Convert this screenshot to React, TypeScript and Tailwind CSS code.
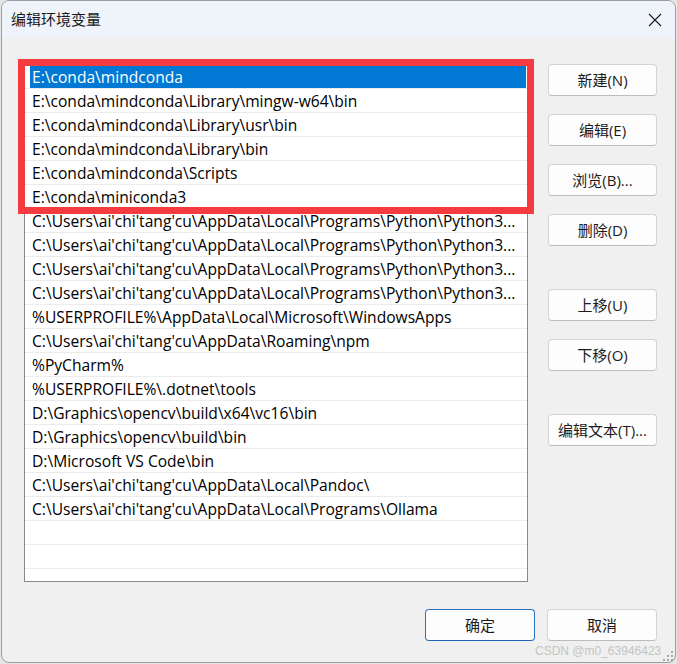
import React from "react";

const rows: string[] = [
  "E:\\conda\\mindconda",
  "E:\\conda\\mindconda\\Library\\mingw-w64\\bin",
  "E:\\conda\\mindconda\\Library\\usr\\bin",
  "E:\\conda\\mindconda\\Library\\bin",
  "E:\\conda\\mindconda\\Scripts",
  "E:\\conda\\miniconda3",
  "C:\\Users\\ai'chi'tang'cu\\AppData\\Local\\Programs\\Python\\Python3...",
  "C:\\Users\\ai'chi'tang'cu\\AppData\\Local\\Programs\\Python\\Python3...",
  "C:\\Users\\ai'chi'tang'cu\\AppData\\Local\\Programs\\Python\\Python3...",
  "C:\\Users\\ai'chi'tang'cu\\AppData\\Local\\Programs\\Python\\Python3...",
  "%USERPROFILE%\\AppData\\Local\\Microsoft\\WindowsApps",
  "C:\\Users\\ai'chi'tang'cu\\AppData\\Roaming\\npm",
  "%PyCharm%",
  "%USERPROFILE%\\.dotnet\\tools",
  "D:\\Graphics\\opencv\\build\\x64\\vc16\\bin",
  "D:\\Graphics\\opencv\\build\\bin",
  "D:\\Microsoft VS Code\\bin",
  "C:\\Users\\ai'chi'tang'cu\\AppData\\Local\\Pandoc\\",
  "C:\\Users\\ai'chi'tang'cu\\AppData\\Local\\Programs\\Ollama",
  "",
  "",
  "",
];

function Btn({ label, className = "" }: { label: string; className?: string }) {
  return (
    <div
      className={
        "h-[32px] w-[109px] rounded-[4px] border border-[#d3d3d3] border-b-[#bcbcbc] bg-[#fdfdfd] flex items-center justify-center text-[15px] text-[#1b1b1b] " +
        className
      }
    >
      {label}
    </div>
  );
}

export default function App() {
  return (
    <div
      className="relative w-[677px] h-[664px] bg-[#e6e6e6] overflow-hidden"
      style={{ fontFamily: '"Open Sans", "Noto Sans CJK SC", sans-serif' }}
    >
      <div className="ml-[1px] w-[675px] h-[663px] rounded-[8px] border border-[#9c9c9c] bg-[#f0f0f0] overflow-hidden flex flex-col">
        {/* title bar */}
        <div className="h-[37px] shrink-0 bg-[#eff3fa] flex items-center justify-between pl-[9px] pr-[13px]">
          <span
            className="text-[15px] text-[#1a1a1a]"
            style={{ fontFamily: '"Noto Sans CJK SC", sans-serif' }}
          >
            编辑环境变量
          </span>
          <svg width="14" height="14" viewBox="0 0 14 14" className="mt-[1px]">
            <path d="M1 1 L13 13 M13 1 L1 13" stroke="#1a1a1a" strokeWidth="1.1" />
          </svg>
        </div>

        {/* body */}
        <div className="flex-1 flex flex-col pl-[22px] pr-[18px] pt-[26px]">
          <div className="flex gap-[20px]">
            <div className="w-[504px] h-[518px] border border-[#8a8a8a] bg-white overflow-hidden">
              {rows.map((r, i) => (
                <div key={i} className="h-[24px] border-b border-[#ececec]">
                  <div
                    className={
                      "h-[23px] ml-[5px] mr-[1px] pl-[2px] pt-[2px] flex items-center whitespace-nowrap overflow-hidden text-[15.6px] " +
                      (i === 0 ? "bg-[#0078d4] text-white" : "text-black")
                    }
                  >
                    {r}
                  </div>
                </div>
              ))}
            </div>
            <div className="flex flex-col">
              <Btn label="新建(N)" />
              <Btn label="编辑(E)" className="mt-[18px]" />
              <Btn label="浏览(B)..." className="mt-[18px]" />
              <Btn label="删除(D)" className="mt-[18px]" />
              <Btn label="上移(U)" className="mt-[43px]" />
              <Btn label="下移(O)" className="mt-[18px]" />
              <Btn label="编辑文本(T)..." className="mt-[43px]" />
            </div>
          </div>
          <div className="flex justify-end gap-[12px] mt-[27px]">
            <div className="h-[32px] w-[110px] rounded-[4px] border border-[#2b73c2] border-b-[#1f64b0] bg-[#fdfdfd] flex items-center justify-center text-[15px] text-[#1b1b1b]">
              确定
            </div>
            <div className="h-[32px] w-[110px] rounded-[4px] border border-[#d3d3d3] border-b-[#bcbcbc] bg-[#fdfdfd] flex items-center justify-center text-[15px] text-[#1b1b1b]">
              取消
            </div>
          </div>
        </div>
      </div>

      {/* red annotation box */}
      <div className="absolute left-[18px] top-[59px] w-[516px] h-[155px] border-[7px] border-[#f43b3f]" />

      {/* watermark */}
      <div
        className="absolute left-[535px] top-[643px] text-[12px] leading-[16px] text-[#c4c4c4]"
        style={{ fontFamily: '"Liberation Sans", sans-serif' }}
      >
        CSDN @m0_63946423
      </div>

      {/* resize grip */}
      <svg className="absolute left-[663px] top-[651px]" width="12" height="12" viewBox="0 0 12 12">
        <rect x="8" y="0" width="2" height="2" fill="#a8a8a8" />
        <rect x="4" y="4" width="2" height="2" fill="#a8a8a8" />
        <rect x="8" y="4" width="2" height="2" fill="#a8a8a8" />
        <rect x="0" y="8" width="2" height="2" fill="#a8a8a8" />
        <rect x="4" y="8" width="2" height="2" fill="#a8a8a8" />
        <rect x="8" y="8" width="2" height="2" fill="#a8a8a8" />
      </svg>
    </div>
  );
}
